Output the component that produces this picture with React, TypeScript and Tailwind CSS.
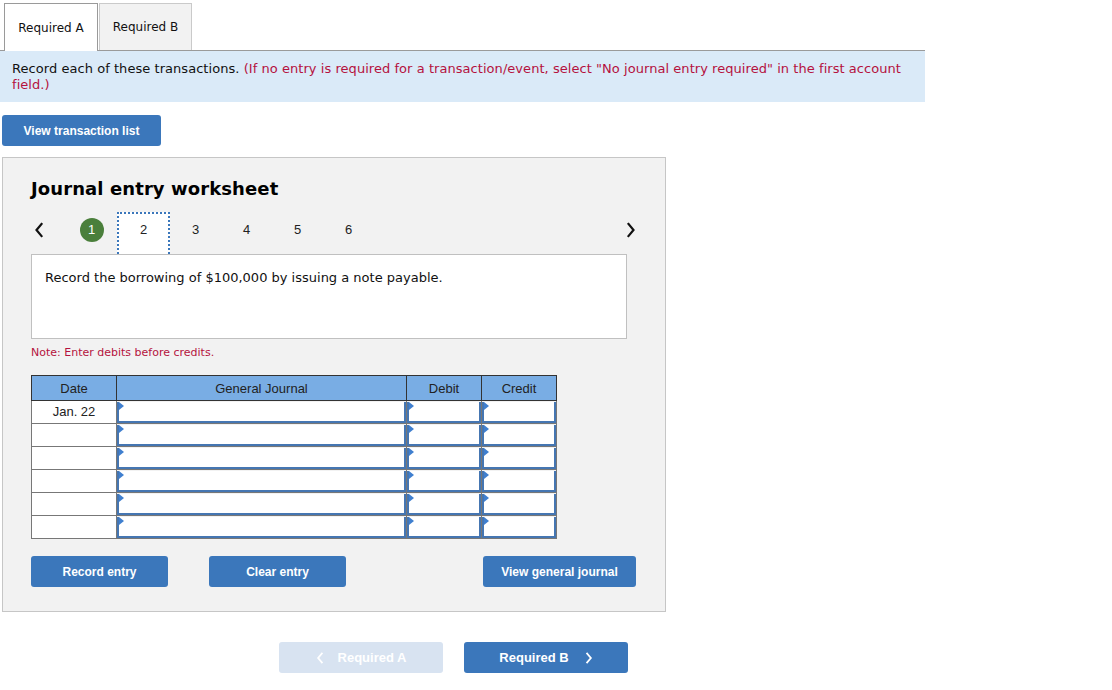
import React from 'react';

const ROWS = ['Jan. 22', '', '', '', '', ''];

const Marker: React.FC = () => (
  <span className="absolute left-0 top-0 w-0 h-0 border-y-[4px] border-y-transparent border-l-[5px] border-l-[#3f7fcf]" />
);

const InputCell: React.FC<{ w: string }> = ({ w }) => (
  <td className={`${w} p-0 border border-[#777] h-[23px]`}>
    <div className="relative h-[21px] bg-white border-2 border-t-0 border-[#4576b2]">
      <Marker />
    </div>
  </td>
);

const Chevron: React.FC<{ dir: 'left' | 'right'; className?: string; sw?: number }> = ({ dir, className, sw = 2.2 }) => (
  <svg viewBox="0 0 10 16" className={className} fill="none" stroke="currentColor" strokeWidth={sw} strokeLinecap="square">
    {dir === 'left' ? <polyline points="7.5,2 2.5,8 7.5,14" /> : <polyline points="2.5,2 7.5,8 2.5,14" />}
  </svg>
);

const BlueButton: React.FC<{ w: string; children: React.ReactNode; className?: string }> = ({ w, children, className = '' }) => (
  <button
    className={`${w} h-[31px] rounded-[3px] bg-[#3b77bb] text-white text-[12px] font-bold font-['Liberation_Sans',Arial,sans-serif] ${className}`}
  >
    {children}
  </button>
);

export default function App() {
  return (
    <div className="w-[1112px] h-[690px] bg-white font-['DejaVu_Sans',Verdana,sans-serif] text-[#111] overflow-hidden">
      {/* tabs */}
      <div className="w-[925px] pt-[3px] pl-[4px] flex gap-[1px] border-b border-[#9a9a9a]">
        <div className="w-[94px] h-[48px] -mb-px bg-white border border-b-0 border-[#9a9a9a] flex items-center justify-center text-[12px]">
          Required A
        </div>
        <div className="w-[93px] h-[47px] bg-[#f2f2f2] border border-b-0 border-[#cacaca] flex items-center justify-center text-[12px]">
          Required B
        </div>
      </div>

      {/* instructions */}
      <div className="w-[925px] h-[51px] bg-[#daeaf8] px-[12px] pt-[10px] text-[13px] leading-[16px] tracking-[0.05px]">
        Record each of these transactions.{' '}
        <span className="text-[#b5123e]">
          (If no entry is required for a transaction/event, select "No journal entry required" in the first account
          <br />
          field.)
        </span>
      </div>

      <div className="pl-[2px] pt-[13px]">
        <BlueButton w="w-[159px]">View transaction list</BlueButton>
      </div>

      {/* worksheet */}
      <div className="ml-[2px] mt-[11px] w-[664px] h-[455px] bg-[#f2f2f2] border border-[#c6c6c6] pl-[28px] pt-[20px]">
        <h2 className="text-[18px] font-bold leading-[22px] tracking-[0.1px] text-black">Journal entry worksheet</h2>

        <div className="mt-[12px] h-[42px] w-[605px] flex items-center font-['Liberation_Sans',Arial,sans-serif] text-[13px] text-[#222]">
          <div className="w-[35px] h-full flex items-center pl-[3px] pb-[7px] text-[#111]">
            <Chevron dir="left" className="w-[10px] h-[16px]" />
          </div>
          <div className="w-[51px] h-full flex items-center justify-center pb-[7px]">
            <span className="w-[24px] h-[24px] rounded-full bg-[#4a7f3b] text-white flex items-center justify-center">1</span>
          </div>
          <div className="w-[53px] h-full bg-white border-2 border-b-0 border-dotted border-[#3b77bb] flex items-center justify-center pb-[9px]">
            2
          </div>
          {['3', '4', '5', '6'].map((n) => (
            <div key={n} className="w-[51px] h-full flex items-center justify-center pb-[7px]">
              {n}
            </div>
          ))}
          <div className="ml-auto h-full flex items-center pb-[7px] text-[#111]">
            <Chevron dir="right" className="w-[10px] h-[16px]" />
          </div>
        </div>

        <div className="w-[596px] h-[85px] bg-white border border-[#c0c0c0] pl-[13px] pt-[15px] text-[13px] leading-[16px]">
          Record the borrowing of $100,000 by issuing a note payable.
        </div>

        <p className="mt-[6px] text-[11px] leading-[16px] text-[#b5123e]">Note: Enter debits before credits.</p>

        <table className="mt-[14px] w-[526px] border-collapse font-['Liberation_Sans',Arial,sans-serif] text-[13px] text-[#222]">
          <thead>
            <tr className="h-[25px] bg-[#79ade4]">
              <th className="w-[85px] border border-[#333] font-normal pt-[2px]">Date</th>
              <th className="w-[290px] border border-[#333] font-normal pt-[2px]">General Journal</th>
              <th className="w-[75px] border border-[#333] font-normal pt-[2px]">Debit</th>
              <th className="w-[75px] border border-[#333] font-normal pt-[2px]">Credit</th>
            </tr>
          </thead>
          <tbody>
            {ROWS.map((d, i) => (
              <tr key={i}>
                <td className="w-[85px] h-[23px] p-0 border border-[#777] bg-white text-center">{d}</td>
                <InputCell w="w-[290px]" />
                <InputCell w="w-[75px]" />
                <InputCell w="w-[75px]" />
              </tr>
            ))}
          </tbody>
        </table>

        <div className="mt-[17px] flex">
          <BlueButton w="w-[137px]">Record entry</BlueButton>
          <BlueButton w="w-[137px]" className="ml-[41px]">
            Clear entry
          </BlueButton>
          <BlueButton w="w-[153px]" className="ml-[137px]">
            View general journal
          </BlueButton>
        </div>
      </div>

      {/* bottom nav */}
      <div className="mt-[30px] pl-[279px] flex gap-[21px] font-['Liberation_Sans',Arial,sans-serif] text-[13px] font-bold">
        <button className="w-[164px] h-[31px] rounded-[3px] bg-[#d8e3f1] text-white flex items-center justify-center gap-[14px]">
          <Chevron dir="left" className="w-[8px] h-[12px]" sw={2.4} />
          Required A
        </button>
        <button className="w-[164px] h-[31px] rounded-[3px] bg-[#3b77bb] text-white flex items-center justify-center gap-[16px]">
          Required B
          <Chevron dir="right" className="w-[8px] h-[12px]" sw={2.4} />
        </button>
      </div>
    </div>
  );
}
